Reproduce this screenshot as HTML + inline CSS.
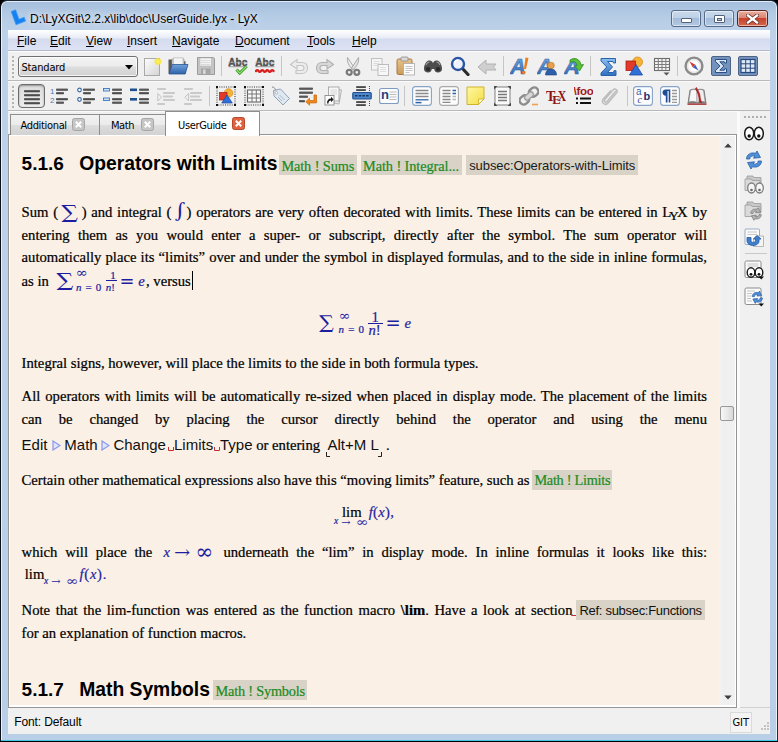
<!DOCTYPE html>
<html><head><meta charset="utf-8"><title>LyX</title>
<style>
html,body{margin:0;padding:0}
body{width:778px;height:742px;position:relative;overflow:hidden;background:#000;font-family:"Liberation Sans",sans-serif;font-size:12px;color:#000}
div,span,svg{position:absolute}
u{text-decoration:underline;text-underline-offset:1px}
#win{left:0;top:0;width:776px;height:740px;border:1px solid #1d2a3a;border-bottom-color:#000;border-left-color:#0c1018;border-radius:7px 7px 1px 1px;
 background:linear-gradient(#a3bddb 0px,#b4cbe5 14px,#bdd1e9 30px,#b9cfe8 100%);box-shadow:inset 0 0 0 1px rgba(255,255,255,.7)}
#cy{left:1px;top:740px;width:776px;height:1px;background:#3ec6e6}
#title{left:30px;top:11px;font-size:12px;line-height:16px;white-space:nowrap;text-shadow:0 0 5px rgba(255,255,255,.85),0 0 9px rgba(255,255,255,.6)}
.cb{top:10px;height:15px;border:1px solid #566b88;border-radius:3px;background:linear-gradient(#cbdaec 0,#bdd0e7 46%,#a4bbda 50%,#b3c8e2 100%);box-shadow:inset 0 0 0 1px rgba(255,255,255,.5)}
.cx{border-color:#5a2420;background:linear-gradient(#e8ae9f 0,#dc8473 46%,#c8422c 50%,#d4664e 100%)}
.hd{width:2px;height:22px;background:repeating-linear-gradient(#b4b4b4 0,#b4b4b4 2px,transparent 2px,transparent 4px);box-shadow:-1px 1px 0 rgba(255,255,255,.0)}
.hdh{left:4px;top:5px;width:22px;height:2px;background:repeating-linear-gradient(90deg,#b0b0b0 0,#b0b0b0 2px,transparent 2px,transparent 4px)}
.vs{width:1px;height:20px;background:#c6c6c6}
#combo{left:18px;top:56px;width:118px;height:19px;border:1px solid #707070;border-radius:3px;background:linear-gradient(#f3f3f3 0,#ececec 48%,#dedede 52%,#d1d1d1 100%);box-shadow:inset 0 0 0 1px rgba(255,255,255,.8)}
#combo span{left:2.5px;top:4px;font:11px/14px 'DejaVu Sans Condensed','Liberation Sans',sans-serif;letter-spacing:-0.18px}
.pb{border:1px solid #6c6c6c;border-radius:4px;background:linear-gradient(#dcdcdc,#ededed);box-shadow:inset 0 1px 2px rgba(0,0,0,.35)}
.tb{border:1px solid #4d6486;border-radius:2px;background:#7393bd}
.tab{top:114px;height:20px;border:1px solid #8e8e8e;border-bottom:none;background:linear-gradient(#f2f2f2 0,#ebebeb 50%,#dddddd 52%,#d2d2d2 100%)}
.tab span{top:4px;line-height:14px;white-space:nowrap;font:11px/14px 'DejaVu Sans Condensed','Liberation Sans',sans-serif;letter-spacing:-0.34px}
.tab.sel{top:111px;height:24px;background:#fff;border-color:#8e8e8e}
.tab.sel span{top:7px}
.tx{top:3px}
.tab.sel .tx{top:5px}
#sb{left:719px;top:136px;width:16px;height:569px;background:linear-gradient(90deg,#f4f4f4,#efefef 30%,#f1f1f1)}
#thumb{left:1px;top:270px;width:12px;height:13px;border:1px solid #999;border-radius:2px;background:linear-gradient(90deg,#f7f7f7,#e9e9e9 50%,#d8d8d8)}
#rtb{left:737px;top:111px;width:33px;height:597px;background:#f0f0f0;border-left:3px solid #fbfbfb;box-sizing:border-box}
#status{left:8px;top:708px;width:762px;height:26px;background:#f0f0f0}
#status span{line-height:14px;white-space:nowrap;letter-spacing:-0.12px}
#git span{font:11px/14px 'DejaVu Sans Condensed','Liberation Sans',sans-serif;letter-spacing:-0.1px}
#git{left:722px;top:4px;width:20px;height:19px;border:1px solid #dadada;background:#f4f4f4}
#client{left:8px;top:30px;width:762px;height:704px;background:#f0f0f0;overflow:hidden}
#menubar{left:0;top:0;width:762px;height:20px;background:linear-gradient(#ffffff 0,#f4f6fb 4px,#e8ebf6 8px,#d5dbee 9px,#d9dff1 14px,#dde3f4 20px)}
#menubar span{top:4px;line-height:14px;white-space:nowrap}
.hl{left:0;width:762px;height:1px}
#frame{left:8px;top:134px;width:727px;height:572px;border:1px solid #959595;background:#fff}
#docbg{left:10px;top:136px;width:709px;height:569px;background:#faf0e6}
#dt{left:0;top:0;width:778px;height:742px;overflow:hidden}
.t{white-space:nowrap;font-family:"Liberation Serif",serif;font-size:14.67px;line-height:20px;color:#000;-webkit-text-stroke:0.22px currentColor}
.j{text-align:justify;text-align-last:justify;white-space:normal;left:21.6px;width:685.4px;height:20px}
.j i{position:relative;display:inline-block;height:1px;font-style:normal;text-align:left;text-align-last:left}
.h{white-space:pre;font-family:"Liberation Sans",sans-serif;font-weight:bold;font-size:19px;line-height:20px}
.ins{background:#d9d3c7;height:20px}
.lab{color:#2a8a2a}
.m{color:#1d1da0}
.g{white-space:nowrap;transform-origin:0 0;-webkit-text-stroke:0}
em{font-style:italic}
</style></head>
<body>
<div id="win"></div><div id="cy"></div>
<div id="title">D:\LyXGit\2.2.x\lib\doc\UserGuide.lyx - LyX</div>
<svg style="left:10px;top:9px" width="18" height="18" viewBox="0 0 18 18"><path d="M1.200 2.600L5.600 .800 9 10.300l5.200-2 1.300 3.800L6 15.800z" fill="#1682f2" stroke="#3a9af8" stroke-width=".8" stroke-linejoin="round"/></svg>
<div class="cb" style="left:671px;width:28px"><div style="left:9px;top:7px;width:9px;height:3px;background:#fff;border:1px solid #53617a;border-radius:1px"></div></div>
<div class="cb" style="left:704px;width:28px"><div style="left:9px;top:4px;width:9px;height:6px;background:#fff;border:1px solid #53617a;border-radius:1px"></div><div style="left:12px;top:7px;width:3px;height:1px;background:#b4c6de;border:1px solid #53617a"></div></div>
<div class="cb cx" style="left:737px;width:29px"><svg style="left:8px;top:3px" width="13" height="10" viewBox="0 0 13 10"><path d="M2 1.500L11 8.500M11 1.500L2 8.500" stroke="#5a2a22" stroke-width="3.800" stroke-linecap="square"/><path d="M2 1.500L11 8.500M11 1.500L2 8.500" stroke="#fff" stroke-width="2.300" stroke-linecap="square"/></svg></div>
<div id="client">
<div id="menubar"><span style="left:9px"><u>F</u>ile</span><span style="left:42px"><u>E</u>dit</span><span style="left:78px"><u>V</u>iew</span><span style="left:119px"><u>I</u>nsert</span><span style="left:164px"><u>N</u>avigate</span><span style="left:227px"><u>D</u>ocument</span><span style="left:299px"><u>T</u>ools</span><span style="left:344px"><u>H</u>elp</span></div>
<div class="hl" style="top:20px;background:#b4b9c8"></div><div class="hl" style="top:21px;background:#fbfbfb"></div><div class="hl" style="top:50px;background:#b9b9b9"></div><div class="hl" style="top:51px;background:#fbfbfb"></div><div class="hl" style="top:80px;background:#b9b9b9"></div><div class="hl" style="top:81px;background:#fbfbfb"></div>
</div>
<div class="hd" style="left:12px;top:55.5px"></div><div class="hd" style="left:12px;top:85.5px"></div><div id="combo"><span>Standard</span><svg style="left:106px;top:8px" width="8" height="5" viewBox="0 0 8 5"><path d="M0 0H8L4 4.5Z" fill="#000"/></svg></div>
<div class="pb" style="left:18px;top:84px;width:25px;height:22px"></div>
<div class="tb" style="left:711px;top:56px;width:18px;height:18px"></div>
<div class="tb" style="left:738px;top:56px;width:18px;height:18px"></div>
<div class="vs" style="left:221px;top:56px"></div><div class="vs" style="left:281px;top:56px"></div><div class="vs" style="left:503px;top:56px"></div><div class="vs" style="left:590px;top:56px"></div><div class="vs" style="left:677px;top:56px"></div><div class="vs" style="left:209px;top:86px"></div><div class="vs" style="left:404px;top:86px"></div><div class="vs" style="left:627px;top:86px"></div>
<div id="frame"></div>
<div class="tab" style="left:10px;width:88px"><span style="left:9.5px">Additional</span><svg class="tx" style="left:61px" width="13" height="13" viewBox="0 0 13 13"><rect x=".5" y=".5" width="12" height="12" rx="2" fill="#c6c6c6" stroke="#a6a6a6"/><path d="M3.800 3.800l5.400 5.400M9.200 3.800l-5.400 5.400" stroke="#fff" stroke-width="2"/></svg></div>
<div class="tab" style="left:99px;width:65px"><span style="left:11px;letter-spacing:-0.42px">Math</span><svg class="tx" style="left:41px" width="13" height="13" viewBox="0 0 13 13"><rect x=".5" y=".5" width="12" height="12" rx="2" fill="#c6c6c6" stroke="#a6a6a6"/><path d="M3.800 3.800l5.400 5.400M9.200 3.800l-5.400 5.400" stroke="#fff" stroke-width="2"/></svg></div>
<div class="tab sel" style="left:165px;width:93px"><span style="left:12px">UserGuide</span><svg class="tx" style="left:66px" width="13" height="13" viewBox="0 0 13 13"><rect x=".5" y=".5" width="12" height="12" rx="2" fill="#e2613f" stroke="#b8472c"/><path d="M3.800 3.800l5.400 5.400M9.200 3.800l-5.400 5.400" stroke="#fff" stroke-width="2"/></svg></div>
<div id="docbg"></div>
<div id="sb">
<svg style="left:4.5px;top:6.5px" width="8" height="5" viewBox="0 0 8 5"><path d="M0.3 4.5L4 0.5L7.700 4.500Z" fill="#3c3c3c"/></svg>
<svg style="left:4.5px;top:558.500px" width="8" height="5" viewBox="0 0 8 5"><path d="M0.3 0.5L4 4.5L7.700 0.500Z" fill="#3c3c3c"/></svg>
<div id="thumb"></div>
</div>
<div id="rtb"><div class="hdh"></div><div style="left:0;top:596px;width:30px;height:1px;background:#d0d0d0"></div><div style="left:5px;top:142px;width:22px;height:1px;background:#c8c8c8"></div></div>
<div id="status"><span style="left:6.3px;top:6.600px">Font: Default</span><div id="git"><span style="left:1.5px;top:3px">GIT</span></div>
<svg style="left:753px;top:14px" width="9" height="9" viewBox="0 0 9 9"><g fill="#c4c4c4"><rect x="6" y="0" width="2" height="2"/><rect x="3" y="3" width="2" height="2"/><rect x="6" y="3" width="2" height="2"/><rect x="0" y="6" width="2" height="2"/><rect x="3" y="6" width="2" height="2"/><rect x="6" y="6" width="2" height="2"/></g></svg>
</div>
<svg width="0" height="0" style="left:0;top:0"><defs>
<linearGradient id="gpg" x1="0" y1="0" x2="1" y2="1"><stop offset="0" stop-color="#fdfdfd"/><stop offset="1" stop-color="#d4d4d4"/></linearGradient>
<linearGradient id="gbl" x1="0" y1="0" x2="0" y2="1"><stop offset="0" stop-color="#6fa3dc"/><stop offset="1" stop-color="#2f62a8"/></linearGradient>
<linearGradient id="gbk" x1="0" y1="0" x2="0" y2="1"><stop offset="0" stop-color="#9a9a9a"/><stop offset="1" stop-color="#4a4a4a"/></linearGradient>
<linearGradient id="ggr" x1="0" y1="0" x2="0" y2="1"><stop offset="0" stop-color="#d6d6d6"/><stop offset="1" stop-color="#a8a8a8"/></linearGradient>
<linearGradient id="gbar" x1="0" y1="0" x2="0" y2="1"><stop offset="0" stop-color="#6e6e6e"/><stop offset="1" stop-color="#3c3c3c"/></linearGradient>
<linearGradient id="gyl" x1="0" y1="0" x2="1" y2="1"><stop offset="0" stop-color="#fff9a0"/><stop offset="1" stop-color="#f3dc4a"/></linearGradient>
<linearGradient id="gtan" x1="0" y1="0" x2="0" y2="1"><stop offset="0" stop-color="#e8c38e"/><stop offset="1" stop-color="#c99b5c"/></linearGradient>
<radialGradient id="gglow"><stop offset="0" stop-color="#fff36a"/><stop offset="0.6" stop-color="#f7e640"/><stop offset="1" stop-color="#f7e640" stop-opacity="0"/></radialGradient>
<linearGradient id="gsg" x1="0" y1="0" x2="0" y2="1"><stop offset="0" stop-color="#8cc0f0"/><stop offset="1" stop-color="#2f6fc0"/></linearGradient>
<linearGradient id="gA" x1="0" y1="0" x2="0" y2="1"><stop offset="0" stop-color="#7fb0e6"/><stop offset="1" stop-color="#2b5fa6"/></linearGradient>
</defs></svg>
<svg style="left:142.5px;top:56.5px" width="20" height="20" viewBox="0 0 20 20"><rect x="1.5" y="1.5" width="15" height="17" fill="url(#gpg)" stroke="#a9a9a9"/><circle cx="15" cy="4.5" r="4.2" fill="url(#gglow)"/></svg>
<svg style="left:167.5px;top:56px" width="21" height="20" viewBox="0 0 21 20"><path d="M.5 3.500h6.500l1.200 1.800h9.300v12.200H.5z" fill="#5a5a5a"/><path d="M4 3h12v9H4z" fill="#dedede" stroke="#8e8e8e" stroke-width=".6"/><path d="M5.500 1.800h9.500v8h-9.500z" fill="#f4f4f4" stroke="#a2a2a2" stroke-width=".5"/><path d="M4.300 8.500h15.700l-2.800 9.500H1z" fill="url(#gbl)" stroke="#2a5590" stroke-width=".8"/></svg>
<svg style="left:195.5px;top:56px" width="20" height="20" viewBox="0 0 20 20"><path d="M1.5 1.5h16l1 1v16h-17z" fill="#c4c4c4" stroke="#9b9b9b"/><rect x="4" y="2" width="11.5" height="8" fill="#f4f4f4" stroke="#b5b5b5" stroke-width=".6"/><path d="M5 4.5h9.5M5 6.5h9.5M5 8.5h9.5" stroke="#d0d0d0" stroke-width=".7"/><rect x="5" y="12.5" width="9.5" height="6" fill="#a5a5a5"/><rect x="7" y="13.5" width="2.6" height="4.5" fill="#d8d8d8"/></svg>
<svg style="left:228px;top:57px" width="20" height="18" viewBox="0 0 20 18"><text x="0.3" y="8.800" font-size="11" font-weight="bold" font-family="'Liberation Sans',sans-serif" fill="#4e4e4e" stroke="#4e4e4e" stroke-width=".45" textLength="19" lengthAdjust="spacingAndGlyphs">Abc</text><rect x="0" y="5" width="20" height="1.200" fill="#b0b0b0" opacity=".5"/><rect x="0.5" y="9.300" width="19" height=".9" fill="#6a6a6a" opacity=".7"/><path d="M8.500 12.500l3.200 3.600L18.500 9.500" fill="none" stroke="#3f9a2a" stroke-width="3" /><path d="M8.500 12.500l3.200 3.600L18.500 9.500" fill="none" stroke="#8fe06a" stroke-width="1.200"/></svg>
<svg style="left:255px;top:57px" width="20" height="18" viewBox="0 0 20 18"><text x="0.3" y="8.800" font-size="11" font-weight="bold" font-family="'Liberation Sans',sans-serif" fill="#4e4e4e" stroke="#4e4e4e" stroke-width=".45" textLength="19" lengthAdjust="spacingAndGlyphs">Abc</text><rect x="0" y="5" width="20" height="1.200" fill="#b0b0b0" opacity=".5"/><rect x="0.5" y="9.300" width="19" height=".9" fill="#6a6a6a" opacity=".7"/><path d="M1 14q1.250-1.800 2.500 0t2.500 0t2.500 0t2.500 0t2.500 0t2.500 0t2.500 0" fill="none" stroke="#d82020" stroke-width="2.300" stroke-linecap="round"/></svg>
<svg style="left:288.5px;top:56.5px" width="20" height="19" viewBox="0 0 20 19"><path d="M1.5 7.5L8 2.5v3h5c3.5 0 5.5 2.4 5.5 5.5s-2.2 5.5-5.5 5.5H7v-3h5.5c1.6 0 2.5-1 2.5-2.5S14 8.500 12.500 8.500H8v3.500z" fill="#ececec" stroke="#c4c4c4" stroke-width="1.100"/></svg>
<svg style="left:315px;top:56.5px" width="20" height="19" viewBox="0 0 20 19"><path d="M18.500 7.500L12 2.500v3H7C3.500 5.500 1.500 7.900 1.500 11s2.200 5.500 5.500 5.500h6v-3H7.500C5.900 13.500 5 12.500 5 11s1-2.500 2.500-2.500H12v3.500z" fill="#d8d8d8" stroke="#b0b0b0" stroke-width="1.100"/></svg>
<svg style="left:344px;top:56.5px" width="18" height="19" viewBox="0 0 18 19"><path d="M3.500 .500L10.600 11.300 8.800 12.600C5.300 9.500 2.600 5 3.500 .500z" fill="#ececec" stroke="#a2a2a2" stroke-width=".9" stroke-linejoin="round"/><path d="M14.500 .500L7.400 11.300 9.200 12.600C12.700 9.500 15.400 5 14.500 .500z" fill="#e2e2e2" stroke="#a2a2a2" stroke-width=".9" stroke-linejoin="round"/><circle cx="5.200" cy="15.300" r="2.500" fill="none" stroke="#7a7a7a" stroke-width="2.200"/><circle cx="12.800" cy="15.300" r="2.500" fill="none" stroke="#7a7a7a" stroke-width="2.200"/></svg>
<svg style="left:369.5px;top:56.5px" width="19" height="19" viewBox="0 0 19 19"><rect x="1.500" y="1.500" width="10.500" height="11.500" fill="#f5f5f5" stroke="#c0c0c0"/><path d="M3.500 4.500h6M3.500 6.500h6M3.500 8.500h4" stroke="#d6d6d6" stroke-width=".8"/><rect x="8" y="7.500" width="10.500" height="11" fill="#f7f7f7" stroke="#bcbcbc"/><path d="M10 10.500h6M10 12.500h6M10 14.500h6" stroke="#d8d8d8" stroke-width=".8"/></svg>
<svg style="left:396px;top:55.5px" width="20" height="20" viewBox="0 0 20 20"><rect x="1" y="3" width="15" height="15.500" rx="1.500" fill="url(#gtan)" stroke="#a9793c"/><rect x="5" y="1" width="7" height="4" rx="1" fill="#d9d9d9" stroke="#8a8a8a" stroke-width=".8"/><rect x="7.500" y="7.500" width="11" height="11.500" fill="#fbfbfb" stroke="#a9a9a9" stroke-width=".8"/><path d="M9.500 10.500h7M9.500 12.500h7M9.500 14.500h7M9.500 16.500h4" stroke="#b8b8b8" stroke-width=".8"/></svg>
<svg style="left:423px;top:56px" width="20.5" height="20" viewBox="0 0 20.5 20"><path d="M1 13c0-4 2-8 5-8.500 2-.3 3.300.7 3.700 2.200h.6C10.700 5.200 12 4.200 14 4.500c3 .5 5 4.500 5 8.500 0 2.200-1.700 3.500-4 3.500s-3.700-1.600-3.800-3.500h-2.400C8.700 14.900 7.300 16.500 5 16.500S1 15.200 1 13z" fill="#4c4c4c"/><path d="M3 9c.8-2 2-3 3.500-3M13.500 6c1.500 0 2.700 1 3.500 3" stroke="#9c9c9c" stroke-width="1.200" fill="none"/><ellipse cx="5" cy="13" rx="2.200" ry="2" fill="#2a2a2a"/><ellipse cx="15" cy="13" rx="2.200" ry="2" fill="#2a2a2a"/></svg>
<svg style="left:450px;top:56px" width="20" height="20" viewBox="0 0 20 20"><path d="M12 12l6 6.500" stroke="#2b2b2b" stroke-width="3.200" stroke-linecap="round"/><circle cx="8" cy="8" r="6" fill="#eef3fb" stroke="#2d55a5" stroke-width="2.400"/><path d="M4.500 7a3.800 3.800 0 0 1 4-3" stroke="#fff" stroke-width="1.200" fill="none"/></svg>
<svg style="left:477px;top:56.5px" width="20" height="20" viewBox="0 0 20 20"><path d="M1 10l8-7v4h10l-2.500 3 2.500 3H9v4z" fill="#cfcfcf" stroke="#b2b2b2" stroke-width="1"/></svg>
<svg style="left:510px;top:56px" width="20" height="20" viewBox="0 0 20 20"><text x="0" y="17.500" font-size="22" font-weight="bold" font-style="italic" font-family="'Liberation Sans',sans-serif" fill="url(#gA)" stroke="#2b5fa6" stroke-width=".5">A</text><path d="M15.500 1.500l3 .5-2.500 11h-2z" fill="#ef7a1a"/><circle cx="13.800" cy="16.500" r="1.800" fill="#ef7a1a"/></svg>
<svg style="left:537px;top:56px" width="20" height="20" viewBox="0 0 20 20"><text x="0" y="17.500" font-size="22" font-weight="bold" font-style="italic" font-family="'Liberation Sans',sans-serif" fill="url(#gA)" stroke="#2b5fa6" stroke-width=".5">A</text><circle cx="14" cy="9.500" r="3.300" fill="#e8a04a" stroke="#b87420" stroke-width=".6"/><path d="M8.500 19c0-4 2.500-6 5.500-6s5.500 2 5.500 6z" fill="#2e5fa8" stroke="#1e4480" stroke-width=".6"/></svg>
<svg style="left:564px;top:56px" width="20" height="20" viewBox="0 0 20 20"><text x="0" y="17.500" font-size="22" font-weight="bold" font-style="italic" font-family="'Liberation Sans',sans-serif" fill="url(#gA)" stroke="#2b5fa6" stroke-width=".5">A</text><path d="M6 4c5-3 10-1 11 5l2.500-.5-4 6.500-5-5 2.700-.4C12.500 6 9.500 4.500 6 6.500z" fill="#5cc03a" stroke="#2f8a1c" stroke-width=".8"/></svg>
<svg style="left:598.5px;top:56.5px" width="18" height="19" viewBox="0 0 18 19"><path d="M2 1.500h14.500v4.500h-2l-.5-1.500H8.500l5 5.500-5 5.500h6l.5-1.800h2V18.500H2v-2.500l5.800-6L2 4z" fill="url(#gsg)" stroke="#2a62ac" stroke-width="1" stroke-linejoin="round"/></svg>
<svg style="left:624.5px;top:55.5px" width="19" height="20" viewBox="0 0 19 20"><circle cx="12.500" cy="6" r="5" fill="#f6b33a" stroke="#d88a14" stroke-width=".8"/><rect x="1" y="5" width="9.500" height="9.500" fill="#e23a2a" stroke="#a81c12" stroke-width=".8"/><path d="M11 8.500l6.500 10.500h-13z" fill="#2f6fd8" stroke="#1a48a0" stroke-width=".8"/></svg>
<svg style="left:652.5px;top:56.5px" width="18" height="20" viewBox="0 0 18 20"><rect x="1.500" y="1.500" width="15" height="12" fill="#f4f4f4" stroke="#6c6c6c" stroke-width="1.100"/><path d="M1.500 4.500h15M1.500 7.500h15M1.500 10.500h15M5.300 1.500v12M9 1.500v12M12.800 1.500v12" stroke="#7c7c7c" stroke-width="1"/><path d="M10.500 15.500h6l-3 3z" fill="#555"/></svg>
<svg style="left:684px;top:55.5px" width="20" height="20" viewBox="0 0 20 20"><circle cx="10" cy="10" r="8.400" fill="#fafafa" stroke="#8a8a8a" stroke-width="2.400"/><circle cx="10" cy="10" r="6.200" fill="#fff" stroke="#d4d4d4" stroke-width=".8"/><path d="M5.500 5.500l5.800 3.200-2.600 2.600z" fill="#d23a2a"/><path d="M14.500 14.500l-5.800-3.200 2.600-2.600z" fill="#3a62b8"/></svg>
<svg style="left:711px;top:56px" width="20" height="20" viewBox="0 0 20 20"><path d="M4.500 3.500h11v3.500h-1.800l-.4-1.200H8.800l4 4.200-4 4.200h4.500l.4-1.400h1.800v3.700h-11v-2l4.600-4.500-4.600-4.500z" fill="#dfeaf8" stroke="#2a4d84" stroke-width="1" stroke-linejoin="round"/></svg>
<svg style="left:738px;top:56px" width="20" height="20" viewBox="0 0 20 20"><rect x="3" y="3.500" width="14" height="13" fill="#dfe9f6" stroke="#27487e" stroke-width="1.200"/><path d="M3 7.800h14M3 12.200h14M7.700 3.500v13M12.300 3.500v13" stroke="#27487e" stroke-width="1"/></svg>
<svg style="left:24px;top:89.5px" width="16" height="15" viewBox="0 0 16 15"><rect x="0" y="0" width="16" height="2.3" rx="0.8" fill="url(#gbar)"/><rect x="0" y="4" width="16" height="2.3" rx="0.8" fill="url(#gbar)"/><rect x="0" y="8" width="16" height="2.3" rx="0.8" fill="url(#gbar)"/><rect x="0" y="12" width="16" height="2.3" rx="0.8" fill="url(#gbar)"/></svg>
<svg style="left:50px;top:86.5px" width="18" height="18" viewBox="0 0 18 18"><text x="0" y="6.800" font-size="8" font-family="'Liberation Sans',sans-serif" fill="#4a7aa8">1</text><text x="0" y="16.300" font-size="8" font-family="'Liberation Sans',sans-serif" fill="#4a7aa8">2</text><rect x="6" y="1.5" width="12" height="2.2" rx="0.8" fill="url(#gbar)"/><rect x="6" y="5" width="8" height="2.2" rx="0.8" fill="url(#gbar)"/><rect x="6" y="11" width="12" height="2.2" rx="0.8" fill="url(#gbar)"/><rect x="6" y="14.5" width="8" height="2.2" rx="0.8" fill="url(#gbar)"/></svg>
<svg style="left:77px;top:86.5px" width="18" height="18" viewBox="0 0 18 18"><circle cx="2.500" cy="3" r="1.800" fill="#fff" stroke="#3b6ca8" stroke-width="1.200"/><circle cx="2.500" cy="12.500" r="1.800" fill="#fff" stroke="#3b6ca8" stroke-width="1.200"/><rect x="6" y="1.5" width="12" height="2.2" rx="0.8" fill="url(#gbar)"/><rect x="6" y="5" width="8" height="2.2" rx="0.8" fill="url(#gbar)"/><rect x="6" y="11" width="12" height="2.2" rx="0.8" fill="url(#gbar)"/><rect x="6" y="14.5" width="8" height="2.2" rx="0.8" fill="url(#gbar)"/></svg>
<svg style="left:103px;top:86.5px" width="19" height="18" viewBox="0 0 19 18"><rect x=".5" y="1.500" width="6" height="2.500" fill="#cfe0f6" stroke="#3b78c4" stroke-width=".9"/><rect x=".5" y="11" width="6" height="2.500" fill="#cfe0f6" stroke="#3b78c4" stroke-width=".9"/><rect x="9" y="1.5" width="10" height="2.2" rx="0.8" fill="url(#gbar)"/><rect x="9" y="5" width="10" height="2.2" rx="0.8" fill="url(#gbar)"/><rect x="9" y="11" width="10" height="2.2" rx="0.8" fill="url(#gbar)"/><rect x="9" y="14.5" width="10" height="2.2" rx="0.8" fill="url(#gbar)"/></svg>
<svg style="left:130px;top:86.5px" width="19" height="18" viewBox="0 0 19 18"><rect x="0" y="1.500" width="7" height="2.600" fill="#1f4f8e"/><rect x="0" y="11" width="7" height="2.600" fill="#1f4f8e"/><rect x="9" y="1.5" width="10" height="2.2" rx="0.8" fill="url(#gbar)"/><rect x="9" y="5" width="10" height="2.2" rx="0.8" fill="url(#gbar)"/><rect x="9" y="11" width="10" height="2.2" rx="0.8" fill="url(#gbar)"/><rect x="9" y="14.5" width="10" height="2.2" rx="0.8" fill="url(#gbar)"/></svg>
<svg style="left:157px;top:86.5px" width="18" height="18" viewBox="0 0 18 18"><rect x="0" y="1" width="9" height="2" rx="0.8" fill="#c9c9c9"/><rect x="6" y="5" width="12" height="2" rx="0.8" fill="#c9c9c9"/><rect x="6" y="8.5" width="10" height="2" rx="0.8" fill="#c9c9c9"/><rect x="6" y="12" width="12" height="2" rx="0.8" fill="#c9c9c9"/><rect x="0" y="16" width="8" height="2" rx="0.8" fill="#c9c9c9"/><path d="M.8 6.500l3.800 3.700L.8 14z" fill="#f0f0f0" stroke="#bdbdbd" stroke-width=".9"/></svg>
<svg style="left:184px;top:86.5px" width="18" height="18" viewBox="0 0 18 18"><rect x="0" y="1" width="9" height="2" rx="0.8" fill="#c9c9c9"/><rect x="6" y="5" width="12" height="2" rx="0.8" fill="#c9c9c9"/><rect x="6" y="8.5" width="10" height="2" rx="0.8" fill="#c9c9c9"/><rect x="6" y="12" width="12" height="2" rx="0.8" fill="#c9c9c9"/><rect x="0" y="16" width="8" height="2" rx="0.8" fill="#c9c9c9"/><path d="M4.600 6.500L.8 10.200 4.600 14z" fill="#f0f0f0" stroke="#bdbdbd" stroke-width=".9"/></svg>
<svg style="left:216px;top:85.5px" width="20" height="20" viewBox="0 0 20 20"><rect x="1" y="1" width="18" height="18" fill="none" stroke="#333" stroke-width="1" stroke-dasharray="1 1.250"/><g fill="#111"><rect x="0" y="0" width="2" height="2"/><rect x="18" y="0" width="2" height="2"/><rect x="0" y="18" width="2" height="2"/><rect x="18" y="18" width="2" height="2"/></g><circle cx="12.500" cy="7" r="4.300" fill="#f6b33a" stroke="#d88a14" stroke-width=".7"/><rect x="3.500" y="6.500" width="7.500" height="7.500" fill="#e23a2a" stroke="#a81c12" stroke-width=".7"/><path d="M11 9l5.300 8h-10.600z" fill="#2f6fd8" stroke="#1a48a0" stroke-width=".7"/></svg>
<svg style="left:243.5px;top:85.5px" width="20" height="20" viewBox="0 0 20 20"><rect x="1" y="1" width="18" height="18" fill="none" stroke="#333" stroke-width="1" stroke-dasharray="1 1.250"/><g fill="#111"><rect x="0" y="0" width="2" height="2"/><rect x="18" y="0" width="2" height="2"/><rect x="0" y="18" width="2" height="2"/><rect x="18" y="18" width="2" height="2"/></g><rect x="3.500" y="4" width="13" height="12" fill="#fafafa" stroke="#666" stroke-width="1.100"/><path d="M3.500 8h13M3.500 12h13M8 4v12M12.300 4v12" stroke="#777" stroke-width="1"/></svg>
<svg style="left:270px;top:85.5px" width="20" height="20" viewBox="0 0 20 20"><path d="M2 1c2 0 3 1 3.500 3" fill="none" stroke="#8a8a8a" stroke-width="1"/><path d="M3.500 4.500l7-1.500 9 9.500-6.500 6.500-9-9z" fill="#dfe7f0" stroke="#93a2b5" stroke-width="1"/><circle cx="6.300" cy="6.800" r="1.300" fill="#fff" stroke="#93a2b5" stroke-width=".7"/><path d="M9.500 9l5 5M8 11l4 4" stroke="#a9b6c6" stroke-width=".9"/></svg>
<svg style="left:298px;top:86px" width="20" height="20" viewBox="0 0 20 20"><rect x="1" y="1.5" width="14" height="2.2" rx="0.8" fill="url(#gbar)"/><rect x="1" y="5.5" width="14" height="2.2" rx="0.8" fill="url(#gbar)"/><rect x="1" y="9.5" width="9" height="2.2" rx="0.8" fill="url(#gbar)"/><rect x="1" y="14" width="6" height="2.2" rx="0.8" fill="url(#gbar)"/><path d="M16 9v5.500h-4.500v-2.300L7.800 15.700l3.700 3.500v-2.300H18.500V9z" fill="#f08a1c" stroke="#c86408" stroke-width=".7"/></svg>
<svg style="left:324px;top:85.5px" width="20" height="20" viewBox="0 0 20 20"><path d="M9 2.500l8.500 1.500-2.500 14-8.500-1.500z" fill="#ececec" stroke="#a4a4a4" stroke-width=".8"/><rect x="4.500" y="1" width="10.500" height="14" fill="#f7f7f7" stroke="#9c9c9c" stroke-width=".8"/><path d="M6.500 4h6.500M6.500 6h6.500M6.500 8h6.500" stroke="#cfcfcf" stroke-width=".8"/><rect x="1" y="9.500" width="9" height="9.500" fill="#fdfdfd" stroke="#8a8a8a" stroke-width=".9"/><path d="M3 17.500c0-3.500 1.500-5 4-5v-1.700l2.600 2.700L7 16.200v-1.700c-1.700 0-2.500 1-2.500 3z" fill="#1c1c1c"/></svg>
<svg style="left:351.5px;top:85.5px" width="20" height="20" viewBox="0 0 20 20"><rect x="4" y="0" width="10" height="2" rx="0.8" fill="url(#gbar)"/><rect x="4" y="3" width="10" height="2" rx="0.8" fill="url(#gbar)"/><rect x="4" y="15" width="10" height="2" rx="0.8" fill="url(#gbar)"/><rect x="4" y="18" width="10" height="2" rx="0.8" fill="url(#gbar)"/><rect x=".8" y="6.500" width="18.400" height="6.500" rx="1" fill="#4c86cc" stroke="#1f4f8e" stroke-width="1.200"/><path d="M3 9.800h14" stroke="#16355f" stroke-width="1.400" stroke-dasharray="2.500 1.200"/><path d="M17.500 0v5M17.500 15v5" stroke="#444" stroke-width="1" stroke-dasharray="1 1"/></svg>
<svg style="left:378.5px;top:85.5px" width="20" height="20" viewBox="0 0 20 20"><rect x=".6" y="2.500" width="18.800" height="15" rx="2" fill="#fcfcfc" stroke="#7f9cc0" stroke-width="1.100"/><text x="2" y="13" font-size="13" font-weight="bold" font-family="'Liberation Sans',sans-serif" fill="#1f3f7a">n</text><path d="M10.500 6h7M10.500 8.500h7M10.500 11h7M10.500 13.500h7" stroke="#bcbcbc" stroke-width="1.100"/></svg>
<svg style="left:411.5px;top:85.5px" width="20" height="20" viewBox="0 0 20 20"><rect x=".6" y=".6" width="18.800" height="18.800" rx="3" fill="#fdfdfd" stroke="#86a3c8" stroke-width="1.100"/><path d="M3.500 4.500h13M3.500 7.500h13M3.500 10.500h13" stroke="#8a8a8a" stroke-width="1.300"/><path d="M3.500 13.800h13" stroke="#2f63a8" stroke-width="1.300"/><path d="M3.500 16.600h6" stroke="#2f63a8" stroke-width="1.500"/></svg>
<svg style="left:438.5px;top:85.5px" width="20" height="20" viewBox="0 0 20 20"><rect x=".6" y=".6" width="18.800" height="18.800" rx="3" fill="#fdfdfd" stroke="#a9a9a9" stroke-width="1.100"/><path d="M3.500 4.500h8M3.500 7.500h8M3.500 10.500h8M3.500 13.500h8M3.500 16.300h8" stroke="#8a8a8a" stroke-width="1.300"/><path d="M13.500 4.500h3.500" stroke="#2f63a8" stroke-width="1.500"/><path d="M13.500 7.500h3.500" stroke="#2f63a8" stroke-width="1.500"/><path d="M13.500 10.500h3.500M13.500 13.500h3.500" stroke="#b8b8b8" stroke-width="1.300"/></svg>
<svg style="left:466px;top:86px" width="19" height="19" viewBox="0 0 19 19"><path d="M1 1h17v12l-5.500 5.500H1z" fill="url(#gyl)" stroke="#c9ad1e" stroke-width=".9"/><path d="M18 13h-5.500v5.500z" fill="#fffbd0" stroke="#c9ad1e" stroke-width=".8"/></svg>
<svg style="left:493.5px;top:85.5px" width="17" height="20" viewBox="0 0 17 20"><rect x="1" y="1" width="15" height="18" fill="#fafafa" stroke="#8a8a8a" stroke-width="1.100"/><g fill="#4a4a4a"><path d="M0 0h3.500L0 3.500zM17 0h-3.500L17 3.500zM0 20h3.500L0 16.500zM17 20h-3.500L17 16.500z"/></g><path d="M4 5.500h9M4 8.500h9M4 11.500h9M4 14.500h9" stroke="#7a7a7a" stroke-width="1.400"/></svg>
<svg style="left:519px;top:85.5px" width="20" height="20" viewBox="0 0 20 20"><g transform="rotate(-40 10 10)"><rect x="-1" y="6" width="10" height="8" rx="4" fill="none" stroke="#8c8c8c" stroke-width="2.400"/><rect x="11" y="6" width="10" height="8" rx="4" fill="none" stroke="#8c8c8c" stroke-width="2.400"/><rect x="5" y="7.500" width="10" height="5" rx="2.500" fill="#d8d8d8" stroke="#a0a0a0" stroke-width="1.400"/></g><path d="M13 18.500h6" stroke="#f0a050" stroke-width="1.600"/></svg>
<svg style="left:546px;top:87px" width="20" height="18" viewBox="0 0 20 18"><text x="0" y="13.500" font-size="14" font-weight="bold" font-family="'Liberation Serif',serif" fill="#8e1414">T</text><text x="6.300" y="16.500" font-size="12.500" font-weight="bold" font-family="'Liberation Serif',serif" fill="#8e1414">E</text><text x="11.800" y="13.500" font-size="14" font-weight="bold" font-family="'Liberation Serif',serif" fill="#8e1414" textLength="8.5" lengthAdjust="spacingAndGlyphs">X</text></svg>
<svg style="left:574px;top:86px" width="19" height="19" viewBox="0 0 19 19"><text x="-.5" y="8.500" font-size="11.500" font-weight="bold" font-family="'Liberation Sans',sans-serif" fill="#a01818" letter-spacing="-0.300">\foo</text><g fill="#111"><rect x="2" y="11.500" width="2" height="2"/><rect x="6" y="11.500" width="11" height="2"/><rect x="2" y="16" width="2" height="2"/><rect x="6" y="16" width="11" height="2"/></g></svg>
<svg style="left:600px;top:85.5px" width="20" height="20" viewBox="0 0 20 20"><path d="M15.500 5.500L7 15.500c-1.300 1.500-3.600-.3-2.300-1.900L13 4c2-2.300 5.500.5 3.500 3L8 17c-2.800 3.200-7.500-.6-4.700-3.900L10.500 5" fill="none" stroke="#bdbdbd" stroke-width="1.500" stroke-linecap="round"/></svg>
<svg style="left:633px;top:85.5px" width="20" height="20" viewBox="0 0 20 20"><rect x=".6" y=".6" width="18.800" height="18.800" rx="3" fill="#fdfdfd" stroke="#86a3c8" stroke-width="1.100"/><text x="3" y="9" font-size="10" font-family="'Liberation Sans',sans-serif" fill="#2f63a8">a</text><text x="4.500" y="17" font-size="10" font-style="italic" font-family="'Liberation Serif',serif" fill="#1f3f8a">c</text><text x="10.500" y="14" font-size="11" font-weight="bold" font-family="'Liberation Sans',sans-serif" fill="#1a3470">b</text></svg>
<svg style="left:660px;top:85.5px" width="20" height="20" viewBox="0 0 20 20"><rect x=".6" y=".6" width="18.800" height="18.800" rx="3" fill="#fdfdfd" stroke="#86a3c8" stroke-width="1.100"/><path d="M9 3.500H5.800C3.800 3.500 2.500 4.800 2.500 6.600S3.800 9.800 5.800 9.800V16.500H7.500V5h1.200V16.500H10.300V3.500z" fill="#1d4f96"/><path d="M12 4.500h5M12 7.500h5M12 10.500h5M12 13.500h5M12 16.300h5" stroke="#9a9a9a" stroke-width="1.300"/></svg>
<svg style="left:687px;top:86px" width="20" height="19" viewBox="0 0 20 19"><path d="M.5 17.500L2.500 4c2.500-1.800 5.500-1.800 7.500 0 2-1.800 5-1.800 7.500 0l2 13.500z" fill="#7a7a7a"/><path d="M1.800 16L3.500 4.500c2-1.500 4.500-1.500 6.500.3V16.500c-2.500-1.300-5.500-1.500-8.200-.5z" fill="#f7f7f7" stroke="#8a8a8a" stroke-width=".6"/><path d="M18.200 16L16.500 4.500c-2-1.500-4.500-1.500-6.500.3V16.500c2.500-1.300 5.500-1.500 8.200-.5z" fill="#f0f0f0" stroke="#8a8a8a" stroke-width=".6"/><path d="M.5 17.500h19v1.300H.5z" fill="#a02020"/><path d="M9.500 1.500c1.500 3 3.800 6 3.800 10.500l1.200 5-2.400-1.600c.3-4.500-1.300-9-3.700-13z" fill="#c42424" stroke="#8a1010" stroke-width=".5"/></svg>
<svg style="left:744px;top:126px" width="20" height="15" viewBox="0 0 20 15"><ellipse cx="5.200" cy="7.500" rx="4.500" ry="6.300" fill="#fff" stroke="#1a1a1a" stroke-width="1.500"/><ellipse cx="14.800" cy="7.500" rx="4.500" ry="6.300" fill="#fff" stroke="#1a1a1a" stroke-width="1.500"/><circle cx="5.200" cy="10" r="1.700" fill="#111"/><circle cx="14.800" cy="10" r="1.700" fill="#111"/></svg>
<svg style="left:744px;top:150px" width="20" height="20" viewBox="0 0 20 20"><path d="M2.500 9C2.500 4.500 7 1.800 11.500 3.300L13 1l3.500 6.500-7 .7 1.300-2.200C8 5.300 5.800 6.800 5.800 9z" fill="#4f8fd8" stroke="#2a5fa8" stroke-width=".8"/><path d="M17.500 11c0 4.500-4.500 7.200-9 5.700L7 19l-3.500-6.500 7-.7-1.300 2.200c2.800.7 5-.8 5-3z" fill="#4f8fd8" stroke="#2a5fa8" stroke-width=".8"/></svg>
<svg style="left:744px;top:175px" width="20" height="20" viewBox="0 0 20 20"><path d="M3 1h6l1 1.500h7v9H3z" fill="#c8c8c8" stroke="#9a9a9a" stroke-width=".8"/><path d="M1 4h6l1 1.500h8v10H1z" fill="#dadada" stroke="#9a9a9a" stroke-width=".8"/><ellipse cx="7.500" cy="13" rx="3.800" ry="5" fill="#f6f6f6" stroke="#7e7e7e" stroke-width="1.300"/><ellipse cx="15.500" cy="13" rx="3.800" ry="5" fill="#f6f6f6" stroke="#7e7e7e" stroke-width="1.300"/><circle cx="7.500" cy="15" r="1.300" fill="#666"/><circle cx="15.500" cy="15" r="1.300" fill="#666"/></svg>
<svg style="left:744px;top:201px" width="20" height="20" viewBox="0 0 20 20"><path d="M3 1h6l1 1.500h7v9H3z" fill="#c8c8c8" stroke="#9a9a9a" stroke-width=".8"/><path d="M1 4h6l1 1.500h8v10H1z" fill="#dadada" stroke="#9a9a9a" stroke-width=".8"/><g transform="translate(5 6) scale(.7)"><path d="M2.500 9C2.500 4.500 7 1.800 11.500 3.300L13 1l3.500 6.500-7 .7 1.300-2.200C8 5.300 5.800 6.800 5.800 9z" fill="#b4b4b4" stroke="#7e7e7e" stroke-width="1.100"/><path d="M17.500 11c0 4.500-4.500 7.200-9 5.700L7 19l-3.500-6.500 7-.7-1.300 2.200c2.800.7 5-.8 5-3z" fill="#b4b4b4" stroke="#7e7e7e" stroke-width="1.100"/></g></svg>
<svg style="left:744px;top:228px" width="20" height="20" viewBox="0 0 20 20"><rect x="1" y="1" width="14.500" height="15.500" rx="1" fill="#fbfbfb" stroke="#8fa4c0" stroke-width=".9"/><path d="M3.500 4h9.500M3.500 6.500h9.500" stroke="#c0c0c0" stroke-width=".9"/><path d="M12 8h7.500v10.500H9.500V10.500z" fill="#f4f4f4" stroke="#a8a8a8" stroke-width=".8"/><path d="M3 9.500h4v3.500c0 2 4.500 2 4.500-.5V11h-2l3.700-3.500L17 11h-2v2c0 6-12 6-12-.3z" fill="#3f7fd0" stroke="#2455a0" stroke-width=".8"/></svg>
<svg style="left:744px;top:260px" width="20" height="20" viewBox="0 0 20 20"><rect x="1" y="1" width="16" height="16.500" rx="1.500" fill="#fbfbfb" stroke="#8a8a8a" stroke-width="1"/><path d="M3.500 4h11M3.500 6h11" stroke="#bdbdbd" stroke-width=".9"/><ellipse cx="7" cy="12.500" rx="3.800" ry="4.800" fill="#fff" stroke="#1a1a1a" stroke-width="1.400"/><ellipse cx="15" cy="12.500" rx="3.800" ry="4.800" fill="#fff" stroke="#1a1a1a" stroke-width="1.400"/><circle cx="7" cy="14.300" r="1.400" fill="#111"/><circle cx="15" cy="14.300" r="1.400" fill="#111"/><path d="M14.500 16.500h5.500l-2.750 3z" fill="#111"/></svg>
<svg style="left:744px;top:286.5px" width="20" height="20" viewBox="0 0 20 20"><rect x="1" y="1" width="16" height="16.500" rx="1.500" fill="#fbfbfb" stroke="#8a8a8a" stroke-width="1"/><path d="M3 4h8M3 6.500h5M3 9h4M3 11.500h4M3 14h5" stroke="#bdbdbd" stroke-width=".9"/><g transform="translate(6.500 3.500) scale(.68)"><path d="M2.500 9C2.500 4.500 7 1.800 11.500 3.300L13 1l3.500 6.500-7 .7 1.300-2.200C8 5.300 5.800 6.800 5.800 9z" fill="#4f8fd8" stroke="#2a5fa8" stroke-width="1.100"/><path d="M17.500 11c0 4.500-4.500 7.200-9 5.700L7 19l-3.500-6.500 7-.7-1.300 2.200c2.800.7 5-.8 5-3z" fill="#4f8fd8" stroke="#2a5fa8" stroke-width="1.100"/></g><path d="M14.500 16.500h5.500l-2.750 3z" fill="#111"/></svg>
<div id="dt">
<span class="h" style="left:21.6px;top:153.92px;font-size:19px;font-family:'Liberation Sans',sans-serif;-webkit-text-stroke:0;">5.1.6</span>
<span class="h" style="left:79.2px;top:153.81px;font-size:19.3px;font-family:'Liberation Sans',sans-serif;-webkit-text-stroke:0;">Operators with Limits</span>
<div class="ins" style="left:279px;top:154.5px;width:77.7px"></div><span class="t" style="left:281.4px;top:156.37px;font-size:14.3px;color:#228b22;letter-spacing:-0.1px;">Math ! Sums</span>
<div class="ins" style="left:361.2px;top:154.5px;width:100.5px"></div><span class="t" style="left:363px;top:156.37px;font-size:14.3px;color:#228b22;letter-spacing:-0.07px;">Math ! Integral...</span>
<div class="ins" style="left:465.7px;top:154.5px;width:172px"></div><span class="t" style="left:469.2px;top:155.70px;font-size:13px;font-family:'Liberation Sans',sans-serif;-webkit-text-stroke:0;color:#1a1a1a;letter-spacing:-0.08px;">subsec:Operators-with-Limits</span>
<div class="t j" style="top:202.05px">Sum (<i style="width:23.7px"><span class="g" style="left:2.12px;top:-11.54px;font-size:16.19px;line-height:16.19px;font-family:'DejaVu Math TeX Gyre','DejaVu Serif',serif;color:#1d1da0;transform:scaleX(1.220);">∑</span></i>) and integral (<i style="width:15.2px"><span class="g" style="left:2.64px;top:-13.20px;font-size:17.27px;line-height:17.27px;font-family:'DejaVu Math TeX Gyre','DejaVu Serif',serif;color:#1d1da0;transform:scaleX(1.198);">∫</span></i>) operators are very often decorated with limits. These limits can be entered in L<em style="font-style:normal;position:relative;top:3px;font-size:13.5px;margin-left:-2.2px;margin-right:-1.8px">Y</em>X by</div>
<div class="t j" style="top:225.05px">entering them as you would enter a super- or subscript, directly after the symbol. The sum operator will</div>
<div class="t j" style="top:247.35000000000002px">automatically place its “limits” over and under the symbol in displayed formulas, and to the side in inline formulas,</div>
<span class="t" style="left:21.6px;top:271.35px;">as in</span>
<span class="g" style="left:54.88px;top:272.96px;font-size:16.19px;line-height:16.19px;font-family:'DejaVu Math TeX Gyre','DejaVu Serif',serif;color:#1d1da0;transform:scaleX(1.251);">∑</span>
<span class="g" style="left:75.64px;top:268.21px;font-size:12.63px;line-height:12.63px;font-family:'DejaVu Math TeX Gyre','DejaVu Serif',serif;color:#1d1da0;transform:scaleX(1.149);">∞</span>
<span class="t" style="left:76px;top:276.59px;font-size:11px;color:#1d1da0;word-spacing:1.3px;"><em>n</em> = 0</span>
<span class="t" style="left:110.3px;top:264.99px;font-size:11px;color:#1d1da0;">1</span>
<div style="left:105.5px;top:280px;width:11.5px;height:1px;background:#1d1da0"></div><span class="t" style="left:105.8px;top:276.59px;font-size:11px;color:#1d1da0;"><em>n</em>!</span>
<span class="g" style="left:120.48px;top:272.17px;font-size:19.29px;line-height:19.29px;font-family:'DejaVu Math TeX Gyre','DejaVu Serif',serif;color:#1d1da0;transform:scaleX(0.922);">=</span>
<span class="t" style="left:138.3px;top:271.35px;color:#1d1da0;font-style:italic;">e</span>
<span class="t" style="left:146px;top:271.35px;">, versus</span>
<div style="left:192px;top:271.3px;width:1px;height:19px;background:#000"></div><span class="g" style="left:317.81px;top:316.36px;font-size:15.71px;line-height:15.71px;font-family:'DejaVu Math TeX Gyre','DejaVu Serif',serif;color:#1d1da0;transform:scaleX(1.108);">∑</span>
<span class="g" style="left:338.56px;top:311.03px;font-size:12.89px;line-height:12.89px;font-family:'DejaVu Math TeX Gyre','DejaVu Serif',serif;color:#1d1da0;transform:scaleX(1.101);">∞</span>
<span class="t" style="left:338.4px;top:319.09px;font-size:11px;color:#1d1da0;word-spacing:1.5px;"><em>n</em> = 0</span>
<span class="t" style="left:371.6px;top:306.65px;color:#1d1da0;">1</span>
<div style="left:367.5px;top:323.0px;width:15.5px;height:1px;background:#1d1da0"></div><span class="t" style="left:368.5px;top:320.15px;color:#1d1da0;"><em>n</em>!</span>
<span class="g" style="left:385.55px;top:314.50px;font-size:18.93px;line-height:18.93px;font-family:'DejaVu Math TeX Gyre','DejaVu Serif',serif;color:#1d1da0;transform:scaleX(0.956);">=</span>
<span class="t" style="left:404.4px;top:312.65px;color:#1d1da0;font-style:italic;">e</span>
<span class="t" style="left:21.6px;top:353.05px;">Integral signs, however, will place the limits to the side in both formula types.</span>
<div class="t j" style="top:386.05px">All operators with limits will be automatically re-sized when placed in display mode. The placement of the limits</div>
<div class="t j" style="top:408.55px">can be changed by placing the cursor directly behind the operator and using the menu</div>
<span class="t" style="left:21.6px;top:434.60px;font-size:15px;font-family:'Liberation Sans',sans-serif;-webkit-text-stroke:0;color:#111;">Edit</span>
<svg style="left:52px;top:439.8px" width="9" height="11" viewBox="0 0 9 11"><path d="M1 1 L8 5.5 L1 10 Z" fill="#dfe3fb" stroke="#8898ea" stroke-width="1.2"/></svg><span class="t" style="left:64.3px;top:434.60px;font-size:15px;font-family:'Liberation Sans',sans-serif;-webkit-text-stroke:0;color:#111;">Math</span>
<svg style="left:101px;top:439.8px" width="9" height="11" viewBox="0 0 9 11"><path d="M1 1 L8 5.5 L1 10 Z" fill="#dfe3fb" stroke="#8898ea" stroke-width="1.2"/></svg><span class="t" style="left:113.4px;top:434.60px;font-size:15px;font-family:'Liberation Sans',sans-serif;-webkit-text-stroke:0;color:#111;">Change</span>
<svg style="left:167.5px;top:446.8px" width="6" height="5" viewBox="0 0 6 5"><path d="M0.5 0 V3.5 H5.5 V0" fill="none" stroke="#c03030" stroke-width="1"/></svg><span class="t" style="left:174px;top:434.60px;font-size:15px;font-family:'Liberation Sans',sans-serif;-webkit-text-stroke:0;color:#111;">Limits</span>
<svg style="left:213.8px;top:446.8px" width="6" height="5" viewBox="0 0 6 5"><path d="M0.5 0 V3.5 H5.5 V0" fill="none" stroke="#c03030" stroke-width="1"/></svg><span class="t" style="left:220px;top:434.60px;font-size:15px;font-family:'Liberation Sans',sans-serif;-webkit-text-stroke:0;color:#111;">Type</span>
<span class="t" style="left:256.2px;top:434.85px;">or entering</span>
<span class="t" style="left:327.5px;top:434.60px;font-size:15px;font-family:'Liberation Sans',sans-serif;-webkit-text-stroke:0;color:#111;">Alt+M L</span>
<svg style="left:326px;top:451.8px" width="57" height="6" viewBox="0 0 57 6"><path d="M0.5 0 V4.5 H4 M52 4.5 H55.5 V0" fill="none" stroke="#222" stroke-width="1"/></svg><span class="t" style="left:386px;top:434.85px;">.</span>
<span class="t" style="left:21.6px;top:469.55px;">Certain other mathematical expressions also have this “moving limits” feature, such as</span>
<div class="ins" style="left:532.4px;top:469.5px;width:79.6px"></div><span class="t" style="left:534.4px;top:470.47px;font-size:14.3px;color:#228b22;letter-spacing:-0.28px;">Math ! Limits</span>
<span class="t" style="left:342px;top:501.55px;">lim</span>
<span class="t" style="left:334px;top:511.49px;font-size:9.5px;color:#1d1da0;font-style:italic;">x</span>
<span class="g" style="left:341.21px;top:517.98px;font-size:9.76px;line-height:9.76px;font-family:'DejaVu Math TeX Gyre','DejaVu Serif',serif;color:#1d1da0;transform:scaleX(1.013);">→</span>
<span class="g" style="left:356.14px;top:517.13px;font-size:11.58px;line-height:11.58px;font-family:'DejaVu Math TeX Gyre','DejaVu Serif',serif;color:#1d1da0;transform:scaleX(1.365);">∞</span>
<span class="t" style="left:368.7px;top:501.55px;color:#1d1da0;letter-spacing:0.3px;"><em>f</em>(<em>x</em>),</span>
<div class="t j" style="top:541.55px">which will place the <i style="width:55.5px"><span class="t m" style="left:3.3px;top:-13.95px;font-style:italic">x</span><span class="g" style="left:14.33px;top:-11.49px;font-size:16.10px;line-height:16.10px;font-family:'DejaVu Math TeX Gyre','DejaVu Serif',serif;color:#1d1da0;transform:scaleX(1.063);">→</span><span class="g" style="left:35.88px;top:-13.07px;font-size:21.58px;line-height:21.58px;font-family:'DejaVu Math TeX Gyre','DejaVu Serif',serif;color:#1d1da0;transform:scaleX(0.994);">∞</span></i> underneath the “lim” in display mode. In inline formulas it looks like this:</div>
<span class="t" style="left:24.8px;top:563.75px;">lim</span>
<span class="t" style="left:44px;top:570.99px;font-size:9.5px;color:#1d1da0;font-style:italic;">x</span>
<span class="g" style="left:51.21px;top:576.58px;font-size:9.76px;line-height:9.76px;font-family:'DejaVu Math TeX Gyre','DejaVu Serif',serif;color:#1d1da0;transform:scaleX(1.013);">→</span>
<span class="g" style="left:65.94px;top:575.73px;font-size:11.58px;line-height:11.58px;font-family:'DejaVu Math TeX Gyre','DejaVu Serif',serif;color:#1d1da0;transform:scaleX(1.365);">∞</span>
<span class="t" style="left:79.5px;top:563.75px;color:#1d1da0;letter-spacing:0.7px;"><em>f</em>(<em>x</em>).</span>
<div class="t j" style="top:600.05px">Note that the lim-function was entered as the function macro <b>\lim</b>. Have a look at section<i style="width:134.5px"></i></div>
<svg style="left:570.5px;top:612px" width="6" height="5" viewBox="0 0 6 5"><path d="M0.5 0 V3.5 H5.5 V0" fill="none" stroke="#c03030" stroke-width="1"/></svg><div class="ins" style="left:576px;top:600px;width:129px"></div><span class="t" style="left:579.5px;top:600.50px;font-size:13px;font-family:'Liberation Sans',sans-serif;-webkit-text-stroke:0;color:#111;letter-spacing:-0.3px;">Ref: subsec:Functions</span>
<span class="t" style="left:21.6px;top:622.55px;">for an explanation of function macros.</span>
<span class="h" style="left:21.6px;top:679.62px;font-size:19px;font-family:'Liberation Sans',sans-serif;-webkit-text-stroke:0;">5.1.7</span>
<span class="h" style="left:79.2px;top:679.51px;font-size:19.3px;font-family:'Liberation Sans',sans-serif;-webkit-text-stroke:0;">Math Symbols</span>
<div class="ins" style="left:213px;top:680.2px;width:94px"></div><span class="t" style="left:215.5px;top:680.97px;font-size:14.3px;color:#228b22;letter-spacing:-0.2px;">Math ! Symbols</span>
</div>
</body></html>
